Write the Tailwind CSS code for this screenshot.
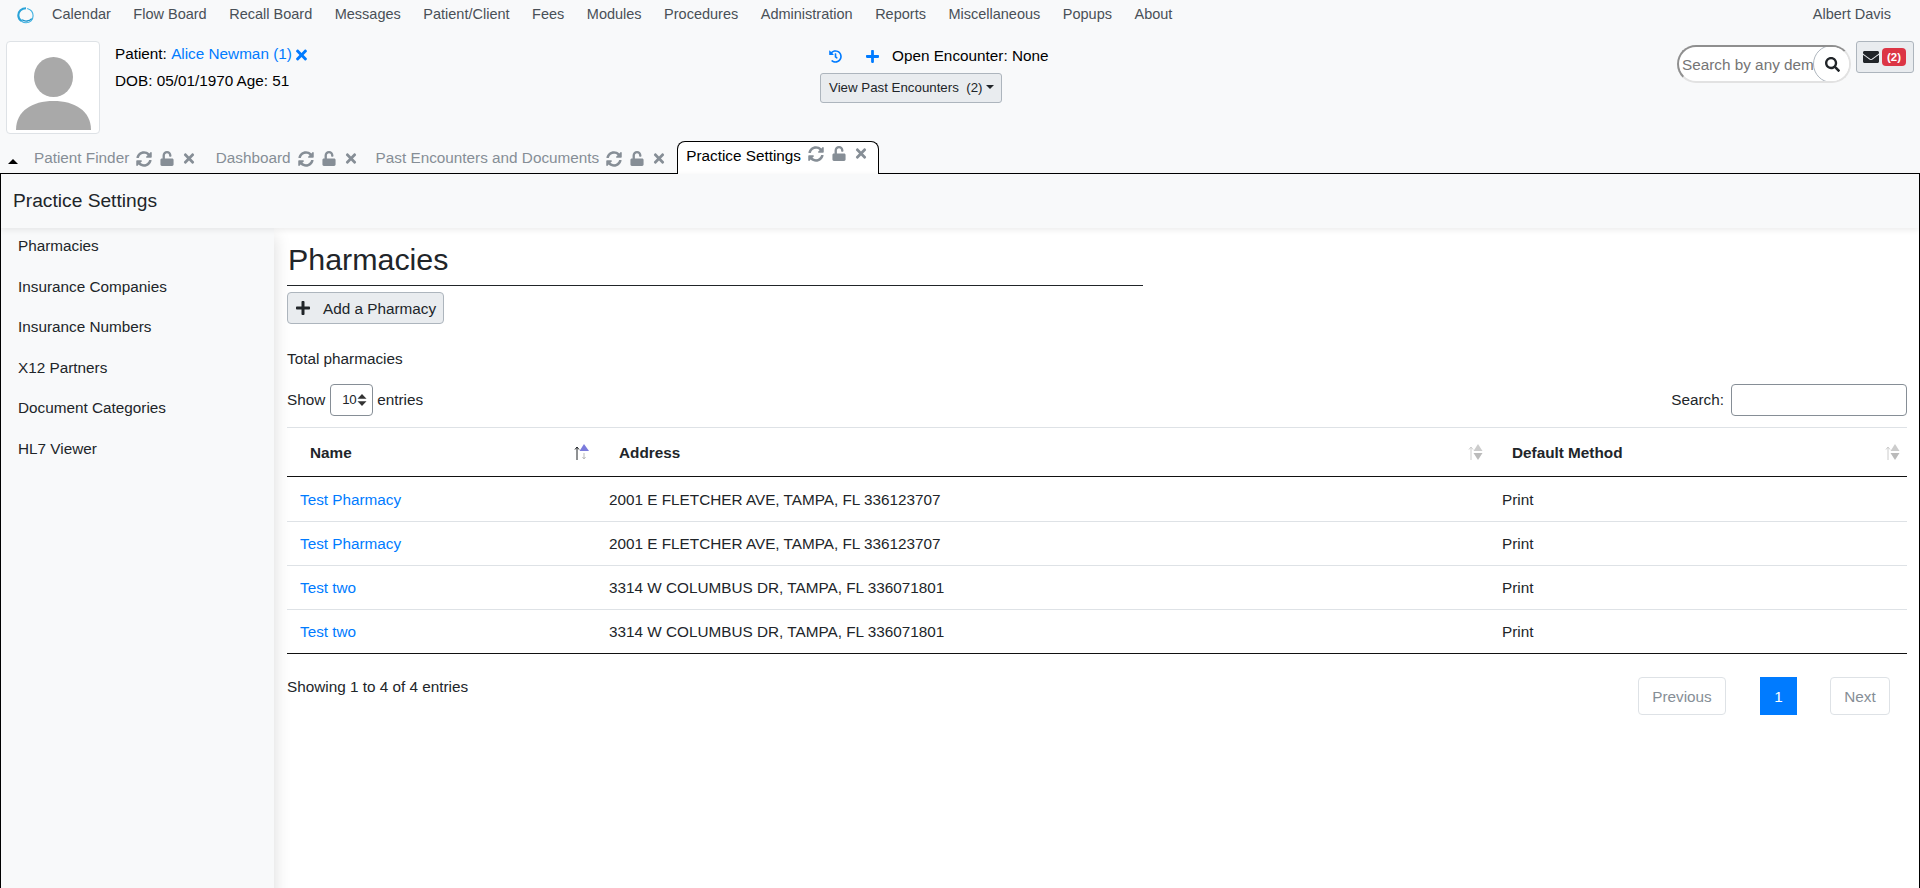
<!DOCTYPE html>
<html lang="en">
<head>
  <meta charset="UTF-8" />
  <title>OpenEMR</title>
  <script src="https://cdn.jsdelivr.net/npm/@tailwindcss/browser@4"></script>
</head>
<body class="h-[888px] overflow-hidden bg-[#f8f9fa] font-['Liberation_Sans',Arial,sans-serif] text-[15.3px] text-[#212529]">

  <!-- Menu -->
  <nav class="flex items-center h-[30px] pl-[17px] pr-[29px] text-[14.5px] text-[#495057]">
    <svg class="w-[18px] h-[17px] mr-[17px]" viewBox="0 0 18 17" fill="none">
      <path d="M9 1.2C4.6 1.2 1.3 4.3 1.3 8.2c0 2.6 1.4 4.8 3.4 6" stroke="#2aa3d8" stroke-width="2.1"/>
      <path d="M4.5 14.2c1.4 1 2.9 1.6 4.6 1.6 3.9 0 7-3 7-7 0-3.3-2.4-6.300-5.900-7.300" stroke="#3db0e0" stroke-width="1.100"/>
      <path d="M5 12.800c2.800 2 7.400 1.700 9.700-1.200" stroke="#1c94cc" stroke-width="1.400"/>
    </svg>
    <div class="flex gap-[22.500px]">
      <a>Calendar</a>
      <a>Flow Board</a>
      <a>Recall Board</a>
      <a>Messages</a>
      <a>Patient/Client</a>
      <a>Fees</a>
      <a>Modules</a>
      <a>Procedures</a>
      <a>Administration</a>
      <a>Reports</a>
      <a>Miscellaneous</a>
      <a>Popups</a>
      <a>About</a>
    </div>
    <span class="ml-auto">Albert Davis</span>
  </nav>

  <!-- Patient header -->
  <div class="flex h-[111px] pt-[11px]">
    <div class="flex w-[820px] pl-[6px]">
      <div class="w-[94px] h-[93px] bg-white border border-[#dee2e6] rounded-[4px] flex justify-center shrink-0">
        <svg class="mt-[14px]" width="75" height="74" viewBox="0 0 75 74">
          <ellipse cx="37.500" cy="21" rx="19.500" ry="20" fill="#a9a9a9"/>
          <path d="M0 74C0 55 16 45 37.500 45S75 55 75 74Z" fill="#a9a9a9"/>
        </svg>
      </div>
      <div class="ml-[15px] text-black">
        <div class="h-[27px] flex items-center">
          <span>Patient:&nbsp;</span><a class="text-[#007bff]">Alice Newman (1)</a>
          <svg class="w-[13px] h-[16px] ml-[3px] fill-[#007bff]" viewBox="0 0 352 512"><path d="M242.72 256l100.07-100.07c12.28-12.28 12.28-32.19 0-44.48l-22.24-22.24c-12.28-12.28-32.19-12.28-44.48 0L176 189.28 75.93 89.21c-12.28-12.28-32.19-12.28-44.48 0L9.21 111.45c-12.28 12.28-12.28 32.19 0 44.48L109.28 256 9.21 356.07c-12.28 12.28-12.28 32.19 0 44.48l22.24 22.24c12.28 12.28 32.2 12.28 44.48 0L176 322.72l100.07 100.07c12.28 12.28 32.2 12.28 44.48 0l22.24-22.24c12.28-12.28 12.28-32.19 0-44.48L242.72 256z"/></svg>
        </div>
        <div class="h-[27px] flex items-center">DOB: 05/01/1970 Age: 51</div>
      </div>
    </div>
    <div class="w-[300px]">
      <div class="flex items-center h-[22px] mt-[4px] pl-[9px] text-black">
        <svg class="w-[13px] h-[13px] fill-[#007bff]" viewBox="0 0 512 512"><path d="M504 255.531c.253 136.64-111.18 248.372-247.82 248.468-59.015.042-113.223-20.53-155.822-54.911-11.077-8.94-11.905-25.541-1.839-35.607l11.267-11.267c8.609-8.609 22.353-9.551 31.891-1.984C173.062 425.135 212.781 440 256 440c101.705 0 184-82.311 184-184 0-101.705-82.311-184-184-184-48.814 0-93.149 18.969-126.068 49.932l50.754 50.754c10.08 10.08 2.941 27.314-11.313 27.314H24c-8.837 0-16-7.163-16-16V38.627c0-14.254 17.234-21.393 27.314-11.314l49.372 49.372C129.209 34.136 189.552 8 256 8c136.81 0 247.747 110.78 248 247.531zm-180.912 78.784l9.823-12.63c8.138-10.463 6.253-25.542-4.21-33.679L288 256.349V152c0-13.255-10.745-24-24-24h-16c-13.255 0-24 10.745-24 24v135.651l65.409 50.874c10.463 8.137 25.541 6.253 33.679-4.21z"/></svg>
        <svg class="w-[13px] h-[15px] ml-[24px] fill-[#007bff]" viewBox="0 0 448 512"><path d="M416 208H272V64c0-17.67-14.33-32-32-32h-32c-17.67 0-32 14.33-32 32v144H32c-17.67 0-32 14.33-32 32v32c0 17.67 14.33 32 32 32h144v144c0 17.67 14.33 32 32 32h32c17.67 0 32-14.33 32-32V304h144c17.67 0 32-14.33 32-32v-32c0-17.67-14.33-32-32-32z"/></svg>
        <span class="ml-[13px]">Open Encounter: None</span>
      </div>
      <button class="flex items-center w-[182px] h-[30px] mt-[6px] pl-[8px] bg-[#e9ecef] border border-[#adb5bd] rounded-[3px] text-[13.300px] text-[#212529]">
        View Past Encounters&nbsp; (2)
        <span class="ml-[4px] mb-[3px] border-x-[4px] border-x-transparent border-t-[4px] border-t-[#212529]"></span>
      </button>
    </div>
    <div class="flex ml-auto pr-[6px] items-start">
      <div class="flex w-[174px] h-[38px] mt-[4px] bg-white rounded-full overflow-hidden border-2 border-t-[#8f8f8f] border-l-[#8f8f8f] border-r-[#e2e2e2] border-b-[#e2e2e2] relative">
        <span class="pl-[3px] leading-[36px] text-[#757575] whitespace-nowrap">Search by any dem</span>
        <span class="absolute -right-[2px] -top-[2px] w-[38px] h-[38px] bg-white rounded-full border border-[#adb5bd] flex items-center justify-center">
          <svg class="w-[15px] h-[15px] fill-[#212529]" viewBox="0 0 512 512"><path d="M505 442.7L405.3 343c-4.5-4.5-10.6-7-17-7H372c27.6-35.3 44-79.7 44-128C416 93.1 322.9 0 208 0S0 93.1 0 208s93.1 208 208 208c48.3 0 92.7-16.4 128-44v16.3c0 6.4 2.5 12.5 7 17l99.7 99.7c9.4 9.4 24.6 9.4 33.9 0l28.3-28.3c9.4-9.4 9.4-24.6.1-34zM208 336c-70.7 0-128-57.2-128-128 0-70.7 57.2-128 128-128 70.7 0 128 57.2 128 128 0 70.7-57.2 128-128 128z"/></svg>
        </span>
      </div>
      <button class="flex items-center w-[58px] h-[32px] ml-[5px] pl-[6px] bg-[#e9ecef] border border-[#adb5bd] rounded-[3px]">
        <svg class="w-[16px] h-[16px] mb-[1px] fill-[#212529]" viewBox="0 0 512 512"><path d="M502.3 190.800c3.900-3.100 9.700-.2 9.700 4.700V400c0 26.500-21.500 48-48 48H48c-26.500 0-48-21.500-48-48V195.600c0-5 5.700-7.800 9.700-4.700 22.400 17.400 52.100 39.500 154.100 113.600 21.100 15.400 56.700 47.800 92.200 47.600 35.700.3 72-32.800 92.300-47.600 102-74.100 131.600-96.300 154-113.700zM256 320c23.200.4 56.600-29.200 73.400-41.400 132.700-96.300 142.800-104.700 173.400-128.700 5.800-4.500 9.200-11.500 9.200-18.900v-19c0-26.500-21.500-48-48-48H48C21.500 64 0 85.500 0 112v19c0 7.400 3.400 14.300 9.200 18.900 30.600 23.900 40.700 32.400 173.400 128.700 16.800 12.200 50.200 41.800 73.400 41.400z"/></svg>
        <span class="ml-[3px] w-[24px] h-[18px] bg-[#dc3545] rounded-[4px] text-white text-[11.400px] font-bold leading-[18px] text-center">(2)</span>
      </button>
    </div>
  </div>

  <!-- Tabs -->
  <div class="flex h-[32px] text-[#868e96] relative z-10">
    <span class="w-0 h-0 ml-[8px] mt-[18px] mr-[16px] border-x-[5px] border-x-transparent border-b-[5px] border-b-black shrink-0"></span>
    <div class="flex items-center h-[32px] pt-[3px] mr-[20.500px]">
      Patient Finder
      <svg class="w-[16px] h-[16px] ml-[7px] fill-[#868e96]" viewBox="0 0 512 512"><path d="M370.72 133.28C339.458 104.008 298.888 87.962 255.848 88c-77.458.068-144.328 53.178-162.791 126.85-1.344 5.363-6.122 9.15-11.651 9.15H24.103c-7.498 0-13.194-6.807-11.807-14.176C33.933 94.924 134.813 8 256 8c66.448 0 126.791 26.136 171.315 68.685L463.03 40.97C478.149 25.851 504 36.559 504 57.941V192c0 13.255-10.745 24-24 24H345.941c-21.382 0-32.09-25.851-16.971-40.971l41.75-41.749zM32 296h134.059c21.382 0 32.09 25.851 16.971 40.971l-41.75 41.75c31.262 29.273 71.835 45.319 114.876 45.28 77.418-.07 144.315-53.144 162.787-126.849 1.344-5.363 6.122-9.15 11.651-9.15h57.304c7.498 0 13.194 6.807 11.807 14.176C478.067 417.076 377.187 504 256 504c-66.448 0-126.791-26.136-171.315-68.685L48.97 471.03C33.851 486.149 8 475.441 8 454.059V320c0-13.255 10.745-24 24-24z"/></svg>
      <svg class="w-[14px] h-[15px] ml-[8px] fill-[#868e96]" viewBox="0 0 448 512"><path d="M400 256H152V152.900c0-39.600 31.700-72.500 71.300-72.900 40-.4 72.700 32.100 72.700 72v16c0 13.300 10.700 24 24 24h32c13.300 0 24-10.700 24-24v-16C376 68 307.500-.3 223.500 0 139.500.3 72 69.500 72 153.500V256H48c-26.500 0-48 21.500-48 48v160c0 26.500 21.500 48 48 48h352c26.500 0 48-21.500 48-48V304c0-26.500-21.500-48-48-48z"/></svg>
      <svg class="w-[12px] h-[15px] ml-[9px] fill-[#868e96]" viewBox="0 0 352 512"><path d="M242.72 256l100.07-100.07c12.28-12.28 12.28-32.19 0-44.48l-22.24-22.24c-12.28-12.28-32.19-12.28-44.48 0L176 189.28 75.93 89.21c-12.28-12.28-32.19-12.28-44.48 0L9.21 111.45c-12.28 12.28-12.28 32.19 0 44.48L109.28 256 9.21 356.07c-12.28 12.28-12.28 32.19 0 44.48l22.24 22.24c12.28 12.28 32.2 12.28 44.48 0L176 322.72l100.07 100.07c12.28 12.28 32.2 12.28 44.48 0l22.24-22.24c12.28-12.28 12.28-32.19 0-44.48L242.72 256z"/></svg>
    </div>
    <div class="flex items-center h-[32px] pt-[3px] mr-[19px]">
      Dashboard
      <svg class="w-[16px] h-[16px] ml-[7px] fill-[#868e96]" viewBox="0 0 512 512"><path d="M370.72 133.28C339.458 104.008 298.888 87.962 255.848 88c-77.458.068-144.328 53.178-162.791 126.85-1.344 5.363-6.122 9.15-11.651 9.15H24.103c-7.498 0-13.194-6.807-11.807-14.176C33.933 94.924 134.813 8 256 8c66.448 0 126.791 26.136 171.315 68.685L463.03 40.97C478.149 25.851 504 36.559 504 57.941V192c0 13.255-10.745 24-24 24H345.941c-21.382 0-32.09-25.851-16.971-40.971l41.75-41.749zM32 296h134.059c21.382 0 32.09 25.851 16.971 40.971l-41.75 41.75c31.262 29.273 71.835 45.319 114.876 45.28 77.418-.07 144.315-53.144 162.787-126.849 1.344-5.363 6.122-9.15 11.651-9.15h57.304c7.498 0 13.194 6.807 11.807 14.176C478.067 417.076 377.187 504 256 504c-66.448 0-126.791-26.136-171.315-68.685L48.97 471.03C33.851 486.149 8 475.441 8 454.059V320c0-13.255 10.745-24 24-24z"/></svg>
      <svg class="w-[14px] h-[15px] ml-[8px] fill-[#868e96]" viewBox="0 0 448 512"><path d="M400 256H152V152.900c0-39.600 31.700-72.500 71.300-72.900 40-.4 72.700 32.100 72.700 72v16c0 13.300 10.700 24 24 24h32c13.300 0 24-10.700 24-24v-16C376 68 307.500-.3 223.500 0 139.500.3 72 69.500 72 153.500V256H48c-26.500 0-48 21.500-48 48v160c0 26.500 21.500 48 48 48h352c26.500 0 48-21.500 48-48V304c0-26.500-21.500-48-48-48z"/></svg>
      <svg class="w-[12px] h-[15px] ml-[9px] fill-[#868e96]" viewBox="0 0 352 512"><path d="M242.72 256l100.07-100.07c12.28-12.28 12.28-32.19 0-44.48l-22.24-22.24c-12.28-12.28-32.19-12.28-44.48 0L176 189.28 75.93 89.21c-12.28-12.28-32.19-12.28-44.48 0L9.21 111.45c-12.28 12.28-12.28 32.19 0 44.48L109.28 256 9.21 356.07c-12.28 12.28-12.28 32.19 0 44.48l22.24 22.24c12.28 12.28 32.2 12.28 44.48 0L176 322.72l100.07 100.07c12.28 12.28 32.2 12.28 44.48 0l22.24-22.24c12.28-12.28 12.28-32.19 0-44.48L242.72 256z"/></svg>
    </div>
    <div class="flex items-center h-[32px] pt-[3px] mr-[12px]">
      Past Encounters and Documents
      <svg class="w-[16px] h-[16px] ml-[7px] fill-[#868e96]" viewBox="0 0 512 512"><path d="M370.72 133.28C339.458 104.008 298.888 87.962 255.848 88c-77.458.068-144.328 53.178-162.791 126.85-1.344 5.363-6.122 9.15-11.651 9.15H24.103c-7.498 0-13.194-6.807-11.807-14.176C33.933 94.924 134.813 8 256 8c66.448 0 126.791 26.136 171.315 68.685L463.03 40.97C478.149 25.851 504 36.559 504 57.941V192c0 13.255-10.745 24-24 24H345.941c-21.382 0-32.09-25.851-16.971-40.971l41.75-41.749zM32 296h134.059c21.382 0 32.09 25.851 16.971 40.971l-41.75 41.75c31.262 29.273 71.835 45.319 114.876 45.28 77.418-.07 144.315-53.144 162.787-126.849 1.344-5.363 6.122-9.15 11.651-9.15h57.304c7.498 0 13.194 6.807 11.807 14.176C478.067 417.076 377.187 504 256 504c-66.448 0-126.791-26.136-171.315-68.685L48.97 471.03C33.851 486.149 8 475.441 8 454.059V320c0-13.255 10.745-24 24-24z"/></svg>
      <svg class="w-[14px] h-[15px] ml-[8px] fill-[#868e96]" viewBox="0 0 448 512"><path d="M400 256H152V152.900c0-39.600 31.700-72.500 71.300-72.900 40-.4 72.700 32.100 72.700 72v16c0 13.300 10.700 24 24 24h32c13.300 0 24-10.700 24-24v-16C376 68 307.500-.3 223.500 0 139.500.3 72 69.500 72 153.500V256H48c-26.500 0-48 21.500-48 48v160c0 26.500 21.500 48 48 48h352c26.500 0 48-21.500 48-48V304c0-26.500-21.500-48-48-48z"/></svg>
      <svg class="w-[12px] h-[15px] ml-[9px] fill-[#868e96]" viewBox="0 0 352 512"><path d="M242.72 256l100.07-100.07c12.28-12.28 12.28-32.19 0-44.48l-22.24-22.24c-12.28-12.28-32.19-12.28-44.48 0L176 189.28 75.93 89.21c-12.28-12.28-32.19-12.28-44.48 0L9.21 111.45c-12.28 12.28-12.28 32.19 0 44.48L109.28 256 9.21 356.07c-12.28 12.28-12.28 32.19 0 44.48l22.24 22.24c12.28 12.28 32.2 12.28 44.48 0L176 322.72l100.07 100.07c12.28 12.28 32.2 12.28 44.48 0l22.24-22.24c12.28-12.28 12.28-32.19 0-44.48L242.72 256z"/></svg>
    </div>
    <div class="flex items-start h-[33px] pt-[3px] pl-[8px] pr-[11px] bg-white border border-b-0 border-black rounded-t-[8px] text-black">
      Practice Settings
      <svg class="w-[16px] h-[16px] mt-[1px] ml-[7px] fill-[#868e96]" viewBox="0 0 512 512"><path d="M370.72 133.28C339.458 104.008 298.888 87.962 255.848 88c-77.458.068-144.328 53.178-162.791 126.85-1.344 5.363-6.122 9.15-11.651 9.15H24.103c-7.498 0-13.194-6.807-11.807-14.176C33.933 94.924 134.813 8 256 8c66.448 0 126.791 26.136 171.315 68.685L463.03 40.97C478.149 25.851 504 36.559 504 57.941V192c0 13.255-10.745 24-24 24H345.941c-21.382 0-32.09-25.851-16.971-40.971l41.75-41.749zM32 296h134.059c21.382 0 32.09 25.851 16.971 40.971l-41.75 41.75c31.262 29.273 71.835 45.319 114.876 45.28 77.418-.07 144.315-53.144 162.787-126.849 1.344-5.363 6.122-9.15 11.651-9.15h57.304c7.498 0 13.194 6.807 11.807 14.176C478.067 417.076 377.187 504 256 504c-66.448 0-126.791-26.136-171.315-68.685L48.97 471.03C33.851 486.149 8 475.441 8 454.059V320c0-13.255 10.745-24 24-24z"/></svg>
      <svg class="w-[14px] h-[15px] mt-[1px] ml-[8px] fill-[#868e96]" viewBox="0 0 448 512"><path d="M400 256H152V152.900c0-39.600 31.700-72.500 71.300-72.900 40-.4 72.700 32.100 72.700 72v16c0 13.300 10.700 24 24 24h32c13.300 0 24-10.700 24-24v-16C376 68 307.500-.3 223.500 0 139.500.3 72 69.500 72 153.500V256H48c-26.500 0-48 21.500-48 48v160c0 26.500 21.500 48 48 48h352c26.500 0 48-21.500 48-48V304c0-26.500-21.500-48-48-48z"/></svg>
      <svg class="w-[12px] h-[15px] mt-[1px] ml-[9px] fill-[#868e96]" viewBox="0 0 352 512"><path d="M242.72 256l100.07-100.07c12.28-12.28 12.28-32.19 0-44.48l-22.24-22.24c-12.28-12.28-32.19-12.28-44.48 0L176 189.28 75.93 89.21c-12.28-12.28-32.19-12.28-44.48 0L9.21 111.45c-12.28 12.28-12.28 32.19 0 44.48L109.28 256 9.21 356.07c-12.28 12.28-12.28 32.19 0 44.48l22.24 22.24c12.28 12.28 32.2 12.28 44.48 0L176 322.72l100.07 100.07c12.28 12.28 32.2 12.28 44.48 0l22.24-22.24c12.28-12.28 12.28-32.19 0-44.48L242.72 256z"/></svg>
    </div>
  </div>

  <!-- Frame -->
  <div class="h-[740px] bg-white border border-black">
    <div class="relative z-10 h-[54px] bg-[#f8f9fa] pl-[12px] text-[19.200px] leading-[54px] text-[#212529] shadow-[0_2px_6px_rgba(0,0,0,0.08)]">Practice Settings</div>
    <div class="flex h-[686px]">
      <aside class="w-[273px] shrink-0 bg-[#f8f9fa] pl-[17px] shadow-[0_8px_16px_rgba(0,0,0,0.15)]">
        <a class="block h-[40.500px] leading-[36px]">Pharmacies</a>
        <a class="block h-[40.500px] leading-[36px]">Insurance Companies</a>
        <a class="block h-[40.500px] leading-[36px]">Insurance Numbers</a>
        <a class="block h-[40.500px] leading-[36px]">X12 Partners</a>
        <a class="block h-[40.500px] leading-[36px]">Document Categories</a>
        <a class="block h-[40.500px] leading-[36px]">HL7 Viewer</a>
      </aside>
      <main class="flex-1 pl-[13px] pr-[12px]">
        <h2 class="w-[856px] h-[58px] pt-[13px] pl-[1px] border-b border-[#212529] text-[30.400px] leading-[36px]">Pharmacies</h2>
        <button class="flex items-center w-[157px] h-[32px] mt-[6px] pl-[8px] bg-[#e9ecef] border border-[#adb5bd] rounded-[4px]">
          <svg class="w-[14px] h-[16px] fill-[#212529]" viewBox="0 0 448 512"><path d="M416 208H272V64c0-17.670-14.330-32-32-32h-32c-17.670 0-32 14.330-32 32v144H32c-17.670 0-32 14.330-32 32v32c0 17.670 14.330 32 32 32h144v144c0 17.670 14.330 32 32 32h32c17.670 0 32-14.330 32-32V304h144c17.670 0 32-14.330 32-32v-32c0-17.670-14.330-32-32-32z"/></svg>
          <span class="ml-[13px] pt-[2px]">Add a Pharmacy</span>
        </button>
        <div class="mt-[24px] h-[22px] leading-[22px]">Total pharmacies</div>
        <div class="flex items-center justify-between mt-[14px] h-[32px]">
          <div class="flex items-center">
            Show
            <span class="flex items-center w-[43px] h-[32px] ml-[5px] mr-[4px] pl-[11px] border border-[#868e96] rounded-[4px] text-[13.300px] tracking-[-0.5px]">10
              <svg class="ml-[1px] w-[10px] h-[14px] fill-[#333]" viewBox="0 0 10 14"><path d="M5 1l4.500 4.700H.5zM5 13L.5 8.300h9z"/></svg>
            </span>
            entries
          </div>
          <div class="flex items-center">
            Search:
            <span class="w-[176px] h-[32px] ml-[7px] bg-white border border-[#868e96] rounded-[4px]"></span>
          </div>
        </div>
        <table class="w-full table-fixed mt-[11px] border-t border-[#dee2e6] border-collapse">
          <colgroup><col class="w-[310px]" /><col class="w-[893px]" /><col /></colgroup>
          <thead>
            <tr class="h-[49px] border-b border-[#111]">
              <th class="pl-[23px] pt-[2px] text-left font-bold relative">Name
                <svg class="absolute right-[8px] top-[16px]" width="16" height="17" viewBox="0 0 16 17"><path d="M4 16V3M2 5.500L4 3l2 2.500" stroke="#212529" fill="none"/><path d="M11 0l5 7H6.500z" fill="#7b7bdc"/><path d="M11 9v6M9.500 13l1.500 2 1.500-2" stroke="#bbb" fill="none"/></svg>
              </th>
              <th class="pl-[22px] pt-[2px] text-left font-bold relative">Address
                <svg class="absolute right-[7px] top-[16px]" width="16" height="17" viewBox="0 0 16 17"><path d="M4 16V3M2 5.500L4 3l2 2.500" stroke="#ccc" fill="none"/><path d="M11 0l4.500 7h-9z" fill="#ccc"/><path d="M11 16l4.500-7h-9z" fill="#bbb"/></svg>
              </th>
              <th class="pl-[22px] pt-[2px] text-left font-bold relative">Default Method
                <svg class="absolute right-[7px] top-[16px]" width="16" height="17" viewBox="0 0 16 17"><path d="M4 16V3M2 5.500L4 3l2 2.500" stroke="#ccc" fill="none"/><path d="M11 0l4.500 7h-9z" fill="#ccc"/><path d="M11 16l4.500-7h-9z" fill="#bbb"/></svg>
              </th>
            </tr>
          </thead>
          <tbody>
            <tr class="h-[45px] border-b border-[#dee2e6]"><td class="pl-[13px] pt-[2px] text-[#007bff]">Test Pharmacy</td><td class="pl-[12px] pt-[2px]">2001 E FLETCHER AVE, TAMPA, FL 336123707</td><td class="pl-[12px] pt-[2px]">Print</td></tr>
            <tr class="h-[44px] border-b border-[#dee2e6]"><td class="pl-[13px] pt-[2px] text-[#007bff]">Test Pharmacy</td><td class="pl-[12px] pt-[2px]">2001 E FLETCHER AVE, TAMPA, FL 336123707</td><td class="pl-[12px] pt-[2px]">Print</td></tr>
            <tr class="h-[44px] border-b border-[#dee2e6]"><td class="pl-[13px] pt-[2px] text-[#007bff]">Test two</td><td class="pl-[12px] pt-[2px]">3314 W COLUMBUS DR, TAMPA, FL 336071801</td><td class="pl-[12px] pt-[2px]">Print</td></tr>
            <tr class="h-[44px] border-b border-[#111]"><td class="pl-[13px] pt-[2px] text-[#007bff]">Test two</td><td class="pl-[12px] pt-[2px]">3314 W COLUMBUS DR, TAMPA, FL 336071801</td><td class="pl-[12px] pt-[2px]">Print</td></tr>
          </tbody>
        </table>
        <div class="flex justify-between items-start mt-[23px] pr-[17px]">
          <span class="mt-[-1px]">Showing 1 to 4 of 4 entries</span>
          <div class="flex text-[#868e96]">
            <span class="w-[88px] h-[38px] mr-[34px] leading-[37px] text-center border border-[#dee2e6] rounded-[4px]">Previous</span>
            <span class="w-[37px] h-[38px] mr-[33px] leading-[39px] text-center bg-[#007bff] text-white">1</span>
            <span class="w-[60px] h-[38px] leading-[37px] text-center border border-[#dee2e6] rounded-[4px]">Next</span>
          </div>
        </div>
      </main>
    </div>
  </div>
</body>
</html>
